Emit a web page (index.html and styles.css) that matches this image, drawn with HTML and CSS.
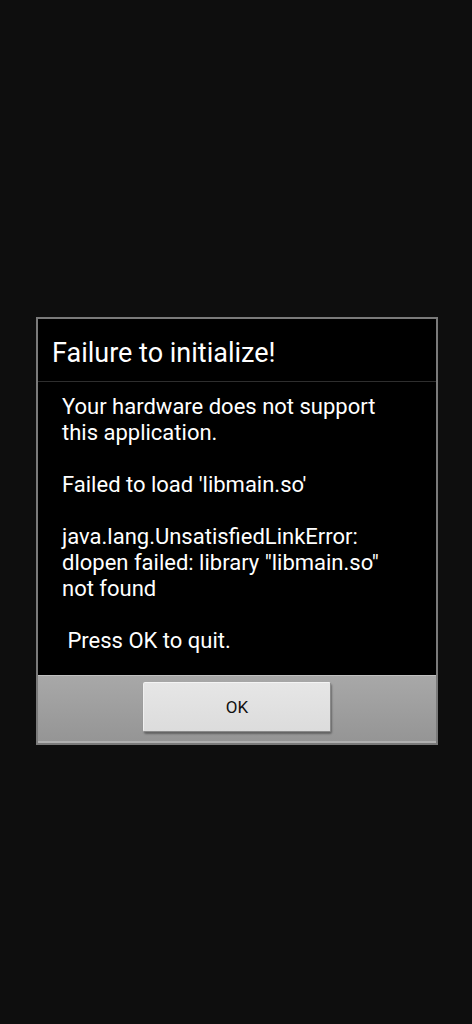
FILE: index.html
```html
<!DOCTYPE html>
<html lang="en">
<head>
  <meta charset="UTF-8">
  <meta name="viewport" content="width=device-width, initial-scale=1.0">
  <title>Failure to initialize!</title>
  <link rel="stylesheet" href="styles.css">
</head>
<body>
  <div class="dialog">
    <h2 class="dialog-title">Failure to initialize!</h2>
    <div class="dialog-body">
      <p>Your hardware does not support this application.</p>
      <p>Failed to load 'libmain.so'</p>
      <p>java.lang.UnsatisfiedLinkError: dlopen failed: library "libmain.so" not found</p>
      <p>&nbsp;Press OK to quit.</p>
    </div>
    <div class="dialog-buttons">
      <button type="button" class="btn-ok">OK</button>
    </div>
  </div>
</body>
</html>
```

FILE: styles.css
```css
body {
  margin: 0;
  padding: 317px 0 0 36px;
  background-color: #0e0e0e;
  font-family: Roboto, "Noto Sans", sans-serif;
  height: 1024px;
  box-sizing: border-box;
}

.dialog {
  width: 402px;
  box-sizing: border-box;
  border: 2px solid #7a7a7a;
  background: #000;
  color: #fff;
}

.dialog-title {
  margin: 0;
  padding: 18px 0 0 14px;
  height: 63px;
  box-sizing: border-box;
  font-size: 27px;
  font-weight: normal;
  border-bottom: 1px solid #2e2e2e;
}

.dialog-body {
  padding: 12px 30px 21px 24px;
  font-size: 22px;
  line-height: 26px;
}

.dialog-body p {
  margin: 0 0 26px;
}

.dialog-body p:last-child {
  margin-bottom: 0;
}

.dialog-buttons {
  display: flex;
  justify-content: center;
  padding: 6px 0 9px;
  background: linear-gradient(#a8a8a8, #959595);
  border-top: 1px solid #c0c0c0;
  border-bottom: 2px solid #b0b0b0;
}

.btn-ok {
  width: 188px;
  height: 50px;
  border: 1px solid #8a8a8a;
  border-top-color: #f4f4f4;
  border-left-color: #f0f0f0;
  border-radius: 2px;
  background: linear-gradient(#e6e6e6, #dcdcdc);
  box-shadow: 1px 2px 2px rgba(0, 0, 0, 0.35);
  font-family: Roboto, "Noto Sans", sans-serif;
  font-size: 17px;
  color: #111;
  cursor: pointer;
}
```
